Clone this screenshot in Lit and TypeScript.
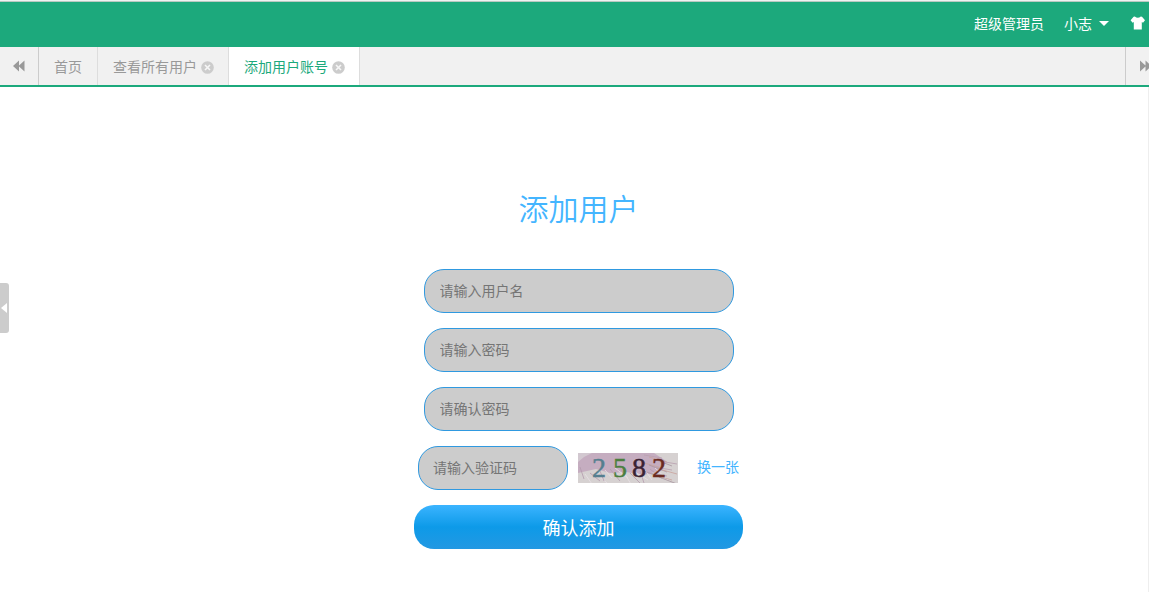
import { LitElement, html, css, svg } from "lit";
import { customElement, state } from "lit/decorators.js";

interface Tab {
  label: string;
  closable: boolean;
}

const FONT = css`"Noto Sans CJK SC", "Noto Sans", sans-serif`;

@customElement("captcha-image")
class CaptchaImage extends LitElement {
  static styles = css`
    :host {
      display: block;
      width: 100px;
      height: 30px;
    }
    svg {
      display: block;
    }
    .digit {
      font: 28px "Liberation Serif", serif;
      text-anchor: middle;
      stroke-width: 0.5px;
    }
  `;

  private pale() {
    return Array.from({ length: 16 }, (_, i) => {
      const x = 2 + i * 5;
      const y = 14 + ((i * 7) % 8);
      return svg`<path d="M${x} ${y}l${4 + (i % 4) * 3} ${12 - (i % 3) * 2}" stroke=${i % 2 ? "#e9dfe6" : "#b49cad"} />`;
    });
  }

  private streaks() {
    return Array.from({ length: 12 }, (_, i) => {
      const x = 66 + ((i * 5) % 20);
      const y = 2 + i * 2;
      return svg`<path d="M${x} ${y}l18 ${3 + (i % 3) * 2}" stroke=${["#b99fae", "#c9a29c", "#a8969f"][i % 3]} />`;
    });
  }

  render() {
    return html`
      <svg width="100" height="30" viewBox="0 0 100 30" role="img" aria-label="验证码 2582">
        <rect width="100" height="30" fill="#d6d1d1" />
        <path d="M0 0H76L88 8L84 17L66 22L48 19L32 20L18 16L0 20Z" fill="#c5adc0" />
        <path d="M0 0H14L6 4L0 9Z" fill="#d2c8d0" />
        <g fill="none" stroke-width="0.8">${this.pale()}${this.streaks()}</g>
        <g class="digit">
          <text x="21" y="24" fill="#557f8f" stroke="#557f8f">2</text>
          <text x="42" y="24" fill="#4b7f3f" stroke="#4b7f3f">5</text>
          <text x="61" y="24" fill="#3a2233" stroke="#3a2233">8</text>
          <text x="81" y="24" fill="#6b2b20" stroke="#6b2b20">2</text>
        </g>
      </svg>
    `;
  }
}

@customElement("app-root")
class AppRoot extends LitElement {
  static styles = css`
    :host {
      display: flex;
      flex-direction: column;
      height: 100vh;
      overflow: hidden;
      background: #fff;
      font-family: ${FONT};
      font-size: 14px;
      line-height: 20px;
    }
    * {
      box-sizing: border-box;
    }
    button,
    input {
      font: inherit;
    }
    button {
      border: 0;
      padding: 0;
      background: none;
      color: inherit;
      cursor: pointer;
    }
    a {
      text-decoration: none;
    }
    svg {
      display: block;
      flex: none;
      fill: currentColor;
    }
    .rule {
      flex: none;
      height: 2px;
      background: #eef3f1;
      border-bottom: 1px solid #b9c9c2;
    }
    .header {
      flex: none;
      display: flex;
      justify-content: flex-end;
      align-items: center;
      gap: 20px;
      height: 45px;
      padding: 0 4px 3px 0;
      background: #1ca97c;
      color: #fff;
    }
    .user {
      display: flex;
      align-items: center;
      gap: 7px;
    }
    .tabbar {
      flex: none;
      display: flex;
      height: 40px;
      border-bottom: 2px solid #1ca97c;
      background: #f1f1f1;
      color: #999;
    }
    .scroll {
      display: flex;
      align-items: center;
      overflow: hidden;
    }
    .back {
      width: 39px;
      padding-left: 13px;
      border-right: 1px solid #ccc;
    }
    .forward {
      width: 24px;
      padding-left: 14px;
      border-left: 1px solid #ccc;
    }
    .tabs {
      flex: 1;
      display: flex;
    }
    .tab {
      display: flex;
      align-items: center;
      gap: 4px;
      padding: 0 15px;
      border-right: 1px solid #ddd;
    }
    .tab.closable {
      padding-right: 14px;
    }
    .tab.active {
      background: #fff;
      color: #1ca97c;
    }
    .tab a {
      color: inherit;
    }
    .close {
      margin-top: 2px;
      color: #ccc;
    }
    .body {
      flex: 1;
      display: flex;
      align-items: stretch;
      margin-bottom: 15px;
      border-right: 1px solid #eee;
    }
    .handle {
      align-self: center;
      display: flex;
      align-items: center;
      width: 9px;
      height: 50px;
      margin-bottom: 64px;
      border-radius: 0 3px 3px 0;
      background: #ccc;
      color: #fff;
    }
    .form {
      flex: 1;
      display: flex;
      flex-direction: column;
      align-items: center;
      gap: 15px;
      padding-top: 98px;
    }
    .title {
      margin: 0 0 24px;
      font-size: 30px;
      font-weight: 350;
      line-height: 45px;
      color: #44b5ff;
    }
    .field {
      width: 310px;
      height: 44px;
      padding: 0 15px 2px;
      border: 1px solid #2f99e0;
      border-radius: 20px;
      outline: none;
      background: #ccc;
      color: #333;
    }
    .field::placeholder {
      color: #757575;
      opacity: 1;
    }
    .verify {
      display: flex;
      align-items: center;
    }
    .verify .field {
      width: 150px;
      margin-right: 10px;
      padding-left: 14px;
    }
    .verify a {
      padding-bottom: 4px;
      margin-left: 19px;
      color: #44b5ff;
    }
    .submit {
      width: 329px;
      height: 44px;
      border-radius: 20px;
      background: linear-gradient(#3bb4ff, #0d9ae8 50%, #2398e2);
      color: #fff;
      font-size: 18px;
    }
  `;

  @state() private active = 2;
  @state() private tabs: Tab[] = [
    { label: "首页", closable: false },
    { label: "查看所有用户", closable: true },
    { label: "添加用户账号", closable: true },
  ];

  private select(e: Event, index: number) {
    e.preventDefault();
    this.active = index;
  }

  private close(index: number) {
    this.tabs = this.tabs.filter((_, i) => i !== index);
    if (this.active >= index) this.active = Math.max(0, this.active - 1);
  }

  private tab(tab: Tab, i: number) {
    return html`
      <div class="tab ${tab.closable ? "closable" : ""} ${i === this.active ? "active" : ""}">
        <a href="#" @click=${(e: Event) => this.select(e, i)}>${tab.label}</a>
        ${tab.closable
          ? html`<button class="close" aria-label="关闭" @click=${() => this.close(i)}>
              <svg width="13" height="13" viewBox="0 0 13 13">
                <circle cx="6.5" cy="6.5" r="6.3" />
                <path d="M4 4L9 9M9 4L4 9" stroke="#f7f7f7" stroke-width="1.6" />
              </svg>
            </button>`
          : ""}
      </div>
    `;
  }

  render() {
    return html`
      <div class="rule"></div>
      <header class="header">
        <span>超级管理员</span>
        <button class="user">
          小志
          <svg width="10" height="5" viewBox="0 0 10 5"><path d="M0 0H10L5 5Z" /></svg>
        </button>
        <button aria-label="主题">
          <svg width="16" height="14" viewBox="0 0 16 14">
            <path d="M5.8 .5Q8.8 3 11.8 .5L13 .8L16 4.3L14 6.7L12.8 6V13.4H4.8V6L3.6 6.7L1.6 4.3L4.6 .8Z" />
          </svg>
        </button>
      </header>
      <nav class="tabbar">
        <button class="scroll back" aria-label="向左">
          <svg width="12" height="12" viewBox="0 0 12 12"><path d="M6 .5V11.5L0 6ZM11.5 .5V11.5L5.5 6Z" /></svg>
        </button>
        <div class="tabs">${this.tabs.map((t, i) => this.tab(t, i))}</div>
        <button class="scroll forward" aria-label="向右">
          <svg width="12" height="12" viewBox="0 0 12 12"><path d="M0 .5V11.5L6 6ZM5.5 .5V11.5L11.5 6Z" /></svg>
        </button>
      </nav>
      <main class="body">
        <button class="handle" aria-label="收起菜单">
          <svg width="7" height="10" viewBox="0 0 7 10"><path d="M7 0V10L1 5Z" /></svg>
        </button>
        <form class="form" @submit=${(e: Event) => e.preventDefault()}>
          <h1 class="title">添加用户</h1>
          <input class="field" type="text" aria-label="用户名" placeholder="请输入用户名" />
          <input class="field" type="password" aria-label="密码" placeholder="请输入密码" />
          <input class="field" type="password" aria-label="确认密码" placeholder="请确认密码" />
          <div class="verify">
            <input class="field" type="text" aria-label="验证码" placeholder="请输入验证码" />
            <captcha-image></captcha-image>
            <a href="#">换一张</a>
          </div>
          <button class="submit" type="submit">确认添加</button>
        </form>
      </main>
    `;
  }
}
